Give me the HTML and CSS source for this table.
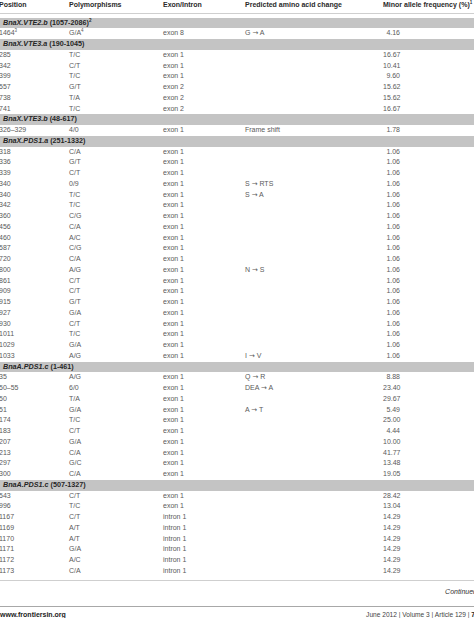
FILE: index.html
```html
<!DOCTYPE html>
<html>
<head>
<meta charset="utf-8">
<link rel="stylesheet" href="styles.css">
</head>
<body>
<div class="page">
  <div class="table">
    <div class="row head">
      <div>Position</div><div>Polymorphisms</div><div>Exon/Intron</div><div>Predicted amino acid change</div><div>Minor allele frequency (%)<sup>1</sup></div>
    </div>
    <div class="body">
      <div class="band"><i>BnaX.VTE2.b</i> (1057-2086)<sup>2</sup></div>
      <div class="row"><div>1464<sup>3</sup></div><div>G/A<sup>4</sup></div><div>exon 8</div><div>G <span class="ar">→</span> A</div><div><span class="num">4.16</span></div></div>
      <div class="band"><i>BnaX.VTE3.a</i> (190-1045)</div>
      <div class="row"><div>285</div><div>T/C</div><div>exon 1</div><div></div><div><span class="num">16.67</span></div></div>
      <div class="row"><div>342</div><div>C/T</div><div>exon 1</div><div></div><div><span class="num">10.41</span></div></div>
      <div class="row"><div>399</div><div>T/C</div><div>exon 1</div><div></div><div><span class="num">9.60</span></div></div>
      <div class="row"><div>557</div><div>G/T</div><div>exon 2</div><div></div><div><span class="num">15.62</span></div></div>
      <div class="row"><div>738</div><div>T/A</div><div>exon 2</div><div></div><div><span class="num">15.62</span></div></div>
      <div class="row"><div>741</div><div>T/C</div><div>exon 2</div><div></div><div><span class="num">16.67</span></div></div>
      <div class="band"><i>BnaX.VTE3.b</i> (48-617)</div>
      <div class="row"><div>326–329</div><div>4/0</div><div>exon 1</div><div>Frame shift</div><div><span class="num">1.78</span></div></div>
      <div class="band"><i>BnaX.PDS1.a</i> (251-1332)</div>
      <div class="row"><div>318</div><div>C/A</div><div>exon 1</div><div></div><div><span class="num">1.06</span></div></div>
      <div class="row"><div>336</div><div>G/T</div><div>exon 1</div><div></div><div><span class="num">1.06</span></div></div>
      <div class="row"><div>339</div><div>C/T</div><div>exon 1</div><div></div><div><span class="num">1.06</span></div></div>
      <div class="row"><div>340</div><div>0/9</div><div>exon 1</div><div>S <span class="ar">→</span> RTS</div><div><span class="num">1.06</span></div></div>
      <div class="row"><div>340</div><div>T/C</div><div>exon 1</div><div>S <span class="ar">→</span> A</div><div><span class="num">1.06</span></div></div>
      <div class="row"><div>342</div><div>T/C</div><div>exon 1</div><div></div><div><span class="num">1.06</span></div></div>
      <div class="row"><div>360</div><div>C/G</div><div>exon 1</div><div></div><div><span class="num">1.06</span></div></div>
      <div class="row"><div>456</div><div>C/A</div><div>exon 1</div><div></div><div><span class="num">1.06</span></div></div>
      <div class="row"><div>460</div><div>A/C</div><div>exon 1</div><div></div><div><span class="num">1.06</span></div></div>
      <div class="row"><div>587</div><div>C/G</div><div>exon 1</div><div></div><div><span class="num">1.06</span></div></div>
      <div class="row"><div>720</div><div>C/A</div><div>exon 1</div><div></div><div><span class="num">1.06</span></div></div>
      <div class="row"><div>800</div><div>A/G</div><div>exon 1</div><div>N <span class="ar">→</span> S</div><div><span class="num">1.06</span></div></div>
      <div class="row"><div>861</div><div>C/T</div><div>exon 1</div><div></div><div><span class="num">1.06</span></div></div>
      <div class="row"><div>909</div><div>C/T</div><div>exon 1</div><div></div><div><span class="num">1.06</span></div></div>
      <div class="row"><div>915</div><div>G/T</div><div>exon 1</div><div></div><div><span class="num">1.06</span></div></div>
      <div class="row"><div>927</div><div>G/A</div><div>exon 1</div><div></div><div><span class="num">1.06</span></div></div>
      <div class="row"><div>930</div><div>C/T</div><div>exon 1</div><div></div><div><span class="num">1.06</span></div></div>
      <div class="row"><div>1011</div><div>T/C</div><div>exon 1</div><div></div><div><span class="num">1.06</span></div></div>
      <div class="row"><div>1029</div><div>G/A</div><div>exon 1</div><div></div><div><span class="num">1.06</span></div></div>
      <div class="row"><div>1033</div><div>A/G</div><div>exon 1</div><div>I <span class="ar">→</span> V</div><div><span class="num">1.06</span></div></div>
      <div class="band"><i>BnaA.PDS1.c</i> (1-461)</div>
      <div class="row"><div>35</div><div>A/G</div><div>exon 1</div><div>Q <span class="ar">→</span> R</div><div><span class="num">8.88</span></div></div>
      <div class="row"><div>50–55</div><div>6/0</div><div>exon 1</div><div>DEA <span class="ar">→</span> A</div><div><span class="num">23.40</span></div></div>
      <div class="row"><div>50</div><div>T/A</div><div>exon 1</div><div></div><div><span class="num">29.67</span></div></div>
      <div class="row"><div>51</div><div>G/A</div><div>exon 1</div><div>A <span class="ar">→</span> T</div><div><span class="num">5.49</span></div></div>
      <div class="row"><div>174</div><div>T/C</div><div>exon 1</div><div></div><div><span class="num">25.00</span></div></div>
      <div class="row"><div>183</div><div>C/T</div><div>exon 1</div><div></div><div><span class="num">4.44</span></div></div>
      <div class="row"><div>207</div><div>G/A</div><div>exon 1</div><div></div><div><span class="num">10.00</span></div></div>
      <div class="row"><div>213</div><div>C/A</div><div>exon 1</div><div></div><div><span class="num">41.77</span></div></div>
      <div class="row"><div>297</div><div>G/C</div><div>exon 1</div><div></div><div><span class="num">13.48</span></div></div>
      <div class="row"><div>300</div><div>C/A</div><div>exon 1</div><div></div><div><span class="num">19.05</span></div></div>
      <div class="band"><i>BnaA.PDS1.c</i> (507-1327)</div>
      <div class="row"><div>543</div><div>C/T</div><div>exon 1</div><div></div><div><span class="num">28.42</span></div></div>
      <div class="row"><div>996</div><div>T/C</div><div>exon 1</div><div></div><div><span class="num">13.04</span></div></div>
      <div class="row"><div>1167</div><div>C/T</div><div>intron 1</div><div></div><div><span class="num">14.29</span></div></div>
      <div class="row"><div>1169</div><div>A/T</div><div>intron 1</div><div></div><div><span class="num">14.29</span></div></div>
      <div class="row"><div>1170</div><div>A/T</div><div>intron 1</div><div></div><div><span class="num">14.29</span></div></div>
      <div class="row"><div>1171</div><div>G/A</div><div>intron 1</div><div></div><div><span class="num">14.29</span></div></div>
      <div class="row"><div>1172</div><div>A/C</div><div>intron 1</div><div></div><div><span class="num">14.29</span></div></div>
      <div class="row"><div>1173</div><div>C/A</div><div>intron 1</div><div></div><div><span class="num">14.29</span></div></div>
    </div>
  </div>
  <div class="endline"></div>
  <div class="cont">Continued</div>
  <div class="footer">
    <div class="site">www.frontiersin.org</div>
    <div class="issue">June 2012 | Volume 3 | Article 129 | <b>7</b></div>
  </div>
</div>
</body>
</html>
```

FILE: styles.css
```css
html, body {
  margin: 0;
  padding: 0;
  background: #ffffff;
}
body {
  width: 474px;
  height: 618px;
  overflow: hidden;
  font-family: "Liberation Sans", Arial, sans-serif;
  font-size: 7px;
  color: #5a5a5a;
}
.page {
  width: 474px;
}
.table {
  margin-left: -1px;
  width: 475px;
}
.row {
  display: grid;
  grid-template-columns: 70px 94px 82px 138px 91px;
  height: 10.75px;
  line-height: 10.75px;
  white-space: nowrap;
}
.head {
  height: 13px;
  line-height: 9px;
  font-weight: bold;
  color: #2a2a2a;
  border-bottom: 1px solid #cfcfcf;
  margin-bottom: 3.5px;
  box-sizing: content-box;
}
.head > div {
  height: 9px;
}
.band {
  height: 10.75px;
  line-height: 10.75px;
  background: #c4c4c4;
  font-weight: bold;
  color: #262626;
  padding-left: 4px;
  white-space: nowrap;
  font-size: 7.2px;
}
sup {
  font-size: 4.5px;
  line-height: 0;
  vertical-align: 3px;
}
.ar {
  font-family: "DejaVu Sans", sans-serif;
  font-size: 7px;
}
.num {
  display: inline-block;
  width: 17px;
  text-align: right;
}
.endline {
  margin-top: 3px;
  height: 1px;
  background: #cfcfcf;
}
.cont {
  padding-top: 6px;
  height: 9px;
  line-height: 9px;
  padding-bottom: 10.5px;
  text-align: right;
  font-style: italic;
  color: #333;
  margin-right: -3px;
  white-space: nowrap;
}
.footer {
  border-top: 1px solid #a8a8a8;
  display: flex;
  justify-content: space-between;
  padding-top: 3px;
  line-height: 10px;
  white-space: nowrap;
}
.site {
  font-weight: bold;
  color: #222;
  font-size: 7px;
}
.issue {
  color: #444;
  font-size: 6.6px;
  margin-right: -1px;
}
.issue b {
  color: #222;
}
```
